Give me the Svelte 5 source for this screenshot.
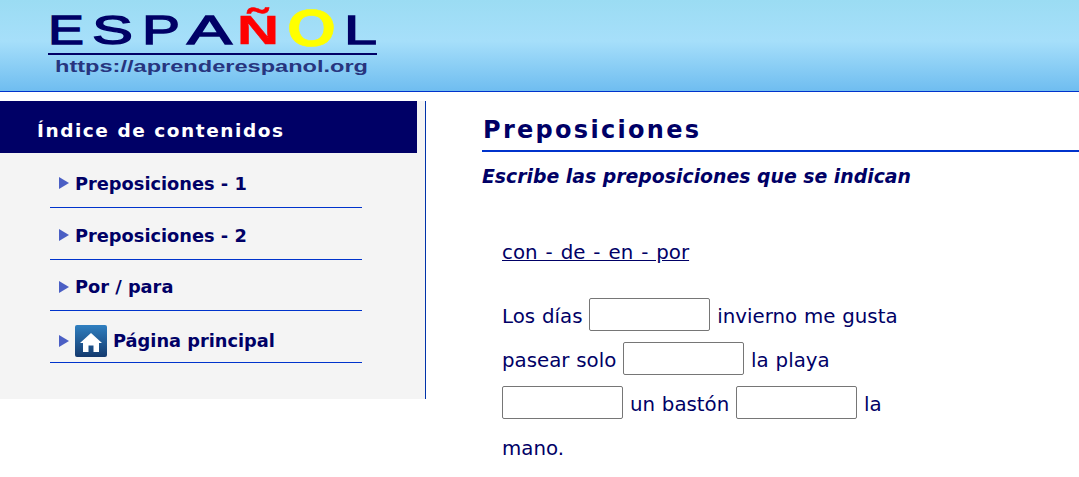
<script>
  const links = [
    { name: 'Preposiciones - 1' },
    { name: 'Preposiciones - 2' },
    { name: 'Por / para' },
    { name: 'Página principal', home: true }
  ];
  // x and width of each stretched letter in the logo
  const letters = [
    { ch: 'E', x: 0, w: 36 },
    { ch: 'S', x: 44, w: 41 },
    { ch: 'P', x: 94, w: 38 },
    { ch: 'A', x: 139, w: 45 }
  ];
</script>

<header class="top">
  <svg class="logo" width="340" height="80" viewBox="0 0 340 80" role="img" aria-label="Español">
    {#each letters as l}
      <text x={l.x} y="44" class="word" textLength={l.w} lengthAdjust="spacingAndGlyphs">{l.ch}</text>
    {/each}
    <text x="189" y="44" class="word red" textLength="42" lengthAdjust="spacingAndGlyphs">Ñ</text>
    <text x="239" y="46" class="word yellow" textLength="49" lengthAdjust="spacingAndGlyphs">O</text>
    <text x="296" y="44" class="word" textLength="33" lengthAdjust="spacingAndGlyphs">L</text>
    <rect x="0" y="53" width="329" height="2" fill="#000066" />
    <text x="7" y="72" class="url" textLength="313" lengthAdjust="spacingAndGlyphs">https://aprenderespanol.org</text>
  </svg>
</header>

<div class="page">
  <aside class="side">
    <h2>Índice de contenidos</h2>
    <ul>
      {#each links as link}
        <li class:home={link.home}>
          <span class="arrow"></span>
          {#if link.home}
            <svg class="house" width="32" height="32" viewBox="0 0 32 32">
              <defs>
                <linearGradient id="tile" x1="0" y1="0" x2="0" y2="1">
                  <stop offset="0" stop-color="#2f7fc0" />
                  <stop offset="1" stop-color="#143a6e" />
                </linearGradient>
              </defs>
              <rect width="32" height="32" rx="2" fill="url(#tile)" />
              <path d="M16 8 L27 18 H24 V27 H18.500 V20.500 H13.500 V27 H8 V18 H5 Z" fill="#fff" />
            </svg>
          {/if}
          <a href="#top">{link.name}</a>
        </li>
      {/each}
    </ul>
  </aside>

  <main class="content">
    <h1>Preposiciones</h1>
    <h3>Escribe las preposiciones que se indican</h3>
    <div class="exercise">
      <p class="words">con - de - en - por</p>
      <p class="lines">
        Los días <input type="text" /> invierno me gusta
        pasear solo <input type="text" /> la playa
        <input type="text" /> un bastón <input type="text" /> la
        mano.
      </p>
    </div>
  </main>
</div>

<style>
  :global(body) {
    font-family: "DejaVu Sans", Verdana, sans-serif;
    color: #000066;
    background: #fff;
    overflow: hidden;
  }

  .top {
    height: 91px;
    border-bottom: 1px solid #0033cc;
    padding-left: 48px;
    background: linear-gradient(#9bdcf3, #a6dffa 45%, #6fbdf0);
  }
  .logo {
    display: block;
  }
  .word {
    font-family: "Liberation Sans", Arial, sans-serif;
    font-size: 41px;
    fill: #000066;
    stroke: #000066;
    stroke-width: 1.300px;
  }
  .red {
    fill: #ff0000;
    stroke: #ff0000;
    stroke-width: 0.500px;
    font-weight: bold;
  }
  .yellow {
    fill: #ffff00;
    stroke: #ffff00;
    stroke-width: 0.500px;
    font-size: 51px;
    font-weight: bold;
  }
  .url {
    font-family: "Liberation Sans", Arial, sans-serif;
    font-size: 17px;
    font-weight: bold;
    fill: #27357f;
  }

  .page {
    display: flex;
    align-items: flex-start;
    padding-top: 9px;
  }

  .side {
    width: 425px;
    height: 298px;
    flex: none;
    background: #f4f4f4;
    border-right: 1px solid #0033aa;
  }
  .side h2 {
    width: 417px;
    height: 52px;
    margin: 0;
    padding-left: 37px;
    box-sizing: border-box;
    background: #000066;
    color: #fff;
    font-size: 18.500px;
    line-height: 60px;
    letter-spacing: 1.550px;
  }
  .side ul {
    list-style: none;
    margin: 0;
    padding: 0 0 0 50px;
    width: 312px;
  }
  .side li {
    display: flex;
    align-items: center;
    box-sizing: border-box;
    height: 51.670px;
    padding: 4px 0 0 9px;
    border-bottom: 1px solid #0033cc;
  }
  .side li:first-child {
    height: 55px;
    padding-top: 6px;
  }
  .side li.home {
    padding-top: 8px;
  }
  .arrow {
    width: 0;
    height: 0;
    margin-right: 6px;
    border-left: 10px solid #4b5fc4;
    border-top: 6px solid transparent;
    border-bottom: 6px solid transparent;
  }
  .house {
    margin-right: 6px;
  }
  .side a {
    color: #000066;
    font-size: 17.800px;
    font-weight: bold;
    text-decoration: none;
  }

  .content {
    flex: 1;
    padding: 14px 0 0 56px;
  }
  h1 {
    margin: 0;
    padding: 0 0 5px 1px;
    border-bottom: 2px solid #0033cc;
    font-size: 24px;
    line-height: 30px;
    letter-spacing: 2.300px;
  }
  h3 {
    margin: 12px 0 0;
    font-size: 18.850px;
    font-style: italic;
    line-height: 26px;
  }
  .exercise {
    width: 405px;
    padding: 50px 0 0 20px;
    font-size: 19.800px;
  }
  .words {
    margin: 0;
    text-decoration: underline;
    line-height: 26px;
    word-spacing: 1.700px;
  }
  .lines {
    margin: 29px 0 0;
    line-height: 44px;
    word-spacing: 0.600px;
  }
  input {
    width: 121px;
    height: 33px;
    box-sizing: border-box;
    vertical-align: middle;
    margin-bottom: 6px;
    border: 1px solid #767676;
    border-radius: 2px;
    padding: 0;
    background: #fff;
  }
</style>
